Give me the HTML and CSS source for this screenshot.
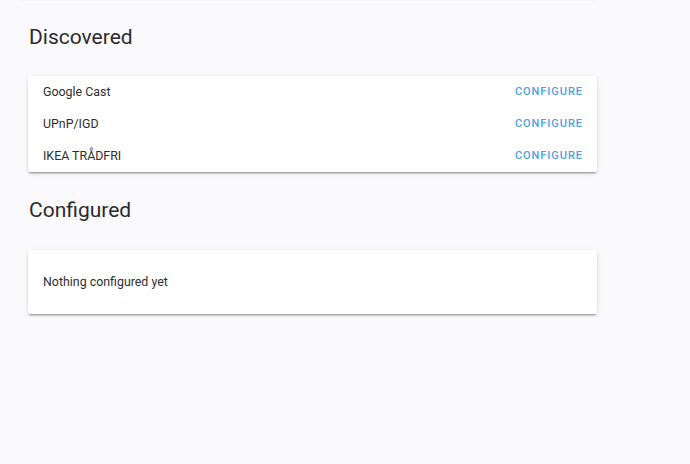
FILE: index.html
```html
<!DOCTYPE html>
<html>
<head>
<meta charset="utf-8">
<link rel="stylesheet" href="styles.css">
</head>
<body>
<div class="page">
  <div class="topline"></div>
  <main class="content">
    <h2 class="section-title">Discovered</h2>
    <div class="card">
      <div class="row"><span class="name">Google Cast</span><button class="action">CONFIGURE</button></div>
      <div class="row"><span class="name">UPnP/IGD</span><button class="action">CONFIGURE</button></div>
      <div class="row"><span class="name">IKEA TRÅDFRI</span><button class="action">CONFIGURE</button></div>
    </div>
    <h2 class="section-title second">Configured</h2>
    <div class="card empty">
      <span class="name">Nothing configured yet</span>
    </div>
  </main>
</div>
</body>
</html>
```
FILE: styles.css
```css
html, body {
  margin: 0;
  padding: 0;
  background: #fafafc;
  font-family: Roboto, "Noto Sans", "Liberation Sans", sans-serif;
}
.page {
  width: 690px;
  height: 464px;
  overflow: hidden;
}
.topline {
  height: 1px;
  margin: 0 95px 0 20px;
  background: #f5f5f8;
}
.content {
  padding: 20px 0 0 28px;
  width: 569px;
}
.section-title {
  margin: 0;
  font-size: 21px;
  font-weight: 400;
  line-height: 32px;
  color: #2a2a2e;
  padding-left: 1px;
}
.section-title.second {
  margin-top: 22px;
}
.card {
  margin-top: 23px;
  background: #fff;
  border-radius: 2px;
  box-shadow: 0 2px 2px rgba(0,0,0,0.14), 0 1px 5px rgba(0,0,0,0.10), 0 3px 1px -2px rgba(0,0,0,0.18);
}
.card.empty {
  margin-top: 24px;
  display: flex;
  align-items: center;
  height: 64px;
  padding: 0 15px 1px;
  box-sizing: border-box;
}
.row {
  height: 32px;
  box-sizing: border-box;
  display: flex;
  align-items: center;
  justify-content: space-between;
  padding: 0 14px 2px 15px;
}
.name {
  font-size: 12.4px;
  color: #2e2e2e;
}
.action {
  border: 0;
  background: none;
  padding: 0;
  font-family: inherit;
  font-size: 11px;
  font-weight: 500;
  letter-spacing: 0.95px;
  color: #4fa1df;
  cursor: pointer;
}
```
